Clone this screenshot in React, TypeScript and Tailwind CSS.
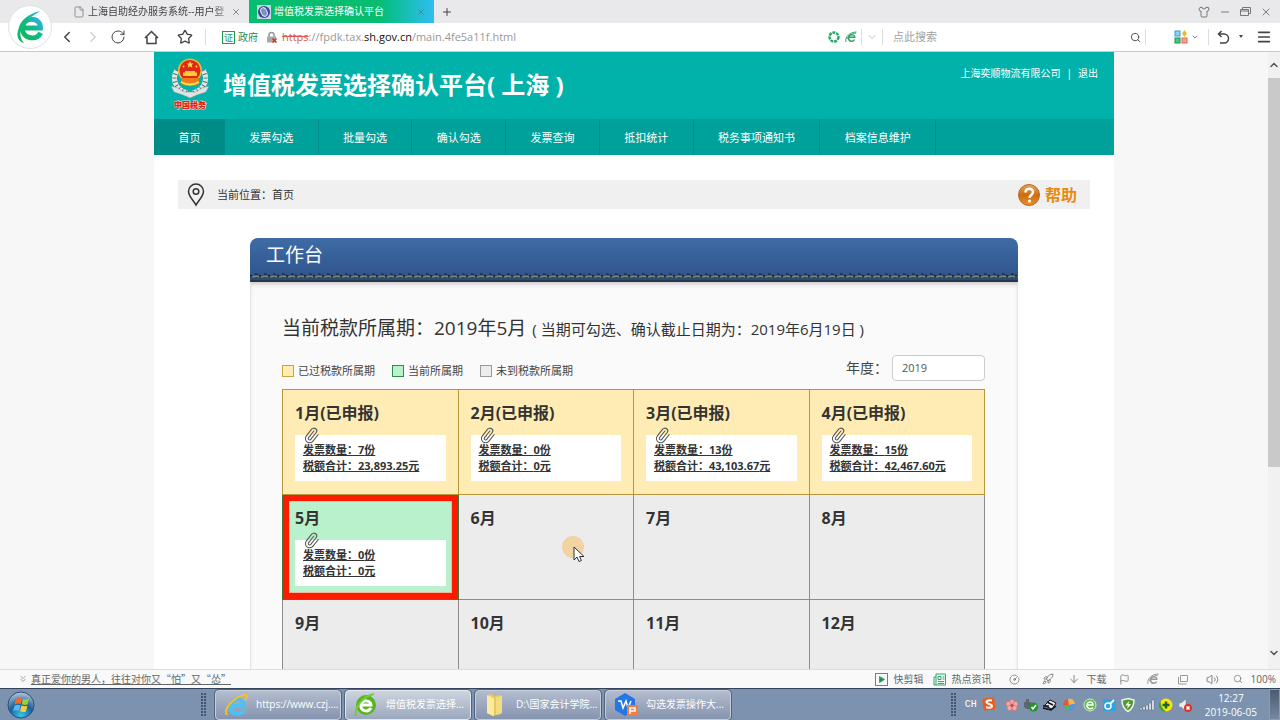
import React, { useState } from 'react';
import {
    ArrowDown,
    ChevronDown,
    ChevronLeft,
    ChevronRight,
    ChevronsDown,
    ChevronUp,
    CircleGauge,
    Copy,
    File,
    Flag,
    Menu,
    Minus,
    Paperclip,
    Plus,
    Rocket,
    RotateCw,
    Search,
    Shirt,
    Star,
    Volume2,
    X,
} from 'lucide-react';

type MonthStatus = 'past' | 'current' | 'future';

interface MonthInfo {
    title: string;
    status: MonthStatus;
    count?: string;
    tax?: string;
}

const navItems = ['发票勾选', '批量勾选', '确认勾选', '发票查询', '抵扣统计', '税务事项通知书', '档案信息维护'];

const rows: MonthInfo[][] = [
    [
        { title: '1月(已申报)', status: 'past', count: '7', tax: '23,893.25' },
        { title: '2月(已申报)', status: 'past', count: '0', tax: '0' },
        { title: '3月(已申报)', status: 'past', count: '13', tax: '43,103.67' },
        { title: '4月(已申报)', status: 'past', count: '15', tax: '42,467.60' },
    ],
    [
        { title: '5月', status: 'current', count: '0', tax: '0' },
        { title: '6月', status: 'future' },
        { title: '7月', status: 'future' },
        { title: '8月', status: 'future' },
    ],
    [
        { title: '9月', status: 'future' },
        { title: '10月', status: 'future' },
        { title: '11月', status: 'future' },
        { title: '12月', status: 'future' },
    ],
];

const cellStyles: Record<MonthStatus, string> = {
    past: 'bg-[#ffecb5] border-[#b8963a]',
    current: 'bg-[#baf1cd] border-[#3f7a3c] shadow-[inset_0_0_0_6px_#fb1c00,inset_0_0_0_7px_#f5b59b]',
    future: 'bg-[#ececec] border-[#8c8c8c]',
};

const BrowserLogo: React.FC<{ className?: string }> = ({ className }) => (
    <svg viewBox="0 0 28 36" className={className} fill="none">
        <defs>
            <linearGradient id="logoFill" x1="0" y1="1" x2="1" y2="0">
                <stop offset="0" stopColor="#0cb85a" />
                <stop offset="0.6" stopColor="#12b98c" />
                <stop offset="1" stopColor="#2fb4f0" />
            </linearGradient>
        </defs>
        <path d="M25 23.500C23 27.500 19 29 15 28.500C9.500 28 6 24 6.300 18.500C6.800 12.500 11 9.500 15.500 9.500C21.500 9.500 25 13.500 24.800 18.500H8" stroke="url(#logoFill)" strokeWidth="5" />
        <path d="M2 20C4 11 12 4 24 1C20 5 11 8 7 15C3 22 3 29 8 34C1 32 0 26 2 20Z" fill="url(#logoFill)" />
    </svg>
);

const SmallBrowserLogo: React.FC<{ className?: string; color: string }> = ({ className, color }) => (
    <svg viewBox="0 0 12 12" className={className} fill="none" stroke={color}>
        <path d="M9.500 8.500C8 11.500 3.500 10.500 3.500 7 3.500 3 9.800 2.500 9.800 6.300H4" strokeWidth="1.500" />
        <path d="M1 11C-.5 6 5 1 11.500 1M2 8C4 4 8 2.500 11 2" />
    </svg>
);

const Emblem = () => (
    <svg viewBox="0 0 40 54" className="h-[54px] w-10 shrink-0" fill="none">
        <path d="M7 12C2 20 4 31 17 35M33 12C38 20 36 31 23 35" stroke="#e5e7e6" strokeWidth="5" />
        <path d="M7 12C2 20 4 31 17 35M33 12C38 20 36 31 23 35" stroke="#4e6b68" strokeWidth="4" strokeDasharray="1 3" />
        <path d="M1 28L8 30L14 34H26L32 30L39 28L36 34L27 37L20 40L13 37L4 34Z" fill="#dfe3e3" stroke="#7d9594" strokeWidth="0.5" />
        <circle cx="20" cy="12.500" r="12" fill="#f4b631" />
        <circle cx="20" cy="12.500" r="10.500" fill="#e02817" />
        <path d="M20 3l1 2.500h2.600l-2 1.600.7 2.600-2.300-1.500-2.300 1.500.7-2.600-2-1.600H19z" fill="#ffd84a" />
        <circle cx="13.500" cy="8.500" r="1" fill="#ffd84a" />
        <circle cx="26.500" cy="8.500" r="1" fill="#ffd84a" />
        <path d="M15 13h10v1.500h2V18H13v-3.500h2z" fill="#ffca38" />
        <path d="M11 20h18v6c-5 3-13 3-18 0z" fill="#ee7b1c" />
        <path d="M11 24q9 5 18 0" stroke="#ffe14f" strokeWidth="2" />
        <text x="20" y="50" textAnchor="middle" fontSize="8" fontWeight="900" fill="#e3210f" stroke="#f6d5cf" strokeWidth="1" paintOrder="stroke" fontFamily="Noto Sans CJK SC, sans-serif">中国税务</text>
    </svg>
);

const Stitches = () => (
    <svg className="h-2 w-full" aria-hidden="true">
        <defs>
            <pattern id="stitch" width="9" height="8" patternUnits="userSpaceOnUse">
                <rect y="4" width="9" height="4" fill="#2b4a72" />
                <path d="M0 3L3 5M5 2L8 3" stroke="#1d2f4b" strokeWidth="2" fill="none" />
                <path d="M2 5L7 4L9 5" stroke="#7d8278" strokeWidth="1.500" fill="none" />
            </pattern>
        </defs>
        <rect width="100%" height="8" fill="url(#stitch)" />
    </svg>
);

const WindowTabs = () => (
    <div className="flex h-[23px] shrink-0 items-center bg-[#e9e9eb] pl-[73px] pr-2 text-[10px]">
        <div className="flex h-full w-44 items-center pr-2">
            <File className="h-3 w-3 shrink-0 text-[#777]" strokeWidth={1.500} />
            <span className="ml-[3px] flex-1 whitespace-nowrap text-[#444] [mask-image:linear-gradient(to_right,#000_88%,transparent)]">
                上海自助经办服务系统--用户登
            </span>
            <button aria-label="关闭标签" className="text-[#777]">
                <X size={10} />
            </button>
        </div>
        <div className="flex h-full w-[185px] items-center bg-linear-to-r from-[#06bd70] from-70% to-[#30bdf2] px-2 text-white">
            <svg viewBox="0 0 14 14" className="h-[14px] w-[14px] shrink-0">
                <rect width="14" height="14" fill="#c9d2e4" />
                <circle cx="7" cy="7" r="6" fill="#35478f" />
                <ellipse cx="7" cy="7" rx="3" ry="4.500" fill="#7f8fc4" stroke="#dbe3f5" transform="rotate(-25 7 7)" />
            </svg>
            <span className="ml-[3px] flex-1 whitespace-nowrap">增值税发票选择确认平台</span>
            <button aria-label="关闭标签" className="text-[#4a7f93]">
                <X size={10} />
            </button>
        </div>
        <button aria-label="新标签" className="ml-[7px] text-[#444]">
            <Plus size={12} />
        </button>
        <div className="ml-auto flex items-center gap-[9px] text-[#555]">
            <button aria-label="皮肤"><Shirt size={12} strokeWidth={1.500} /></button>
            <button aria-label="最小化"><Minus size={12} strokeWidth={1.500} /></button>
            <button aria-label="还原">
                <svg viewBox="0 0 11 10" className="h-[10px] w-[11px]" fill="none" stroke="#777">
                    <path d="M.5 2.500h8v6h-8zM.5 4h8M2.500 2.500v-2h8v6h-2" />
                </svg>
            </button>
            <button aria-label="关闭"><X size={12} strokeWidth={1.500} /></button>
        </div>
    </div>
);

const Divider = () => <span className="block h-4 w-px shrink-0 bg-[#ddd]" />;

const Toolbar = () => (
    <div className="flex h-[29px] shrink-0 items-center border-b border-[#c9c9c9] bg-white pl-[58px] pr-2 text-[#444]">
        <button aria-label="后退"><ChevronLeft size={18} strokeWidth={2} /></button>
        <button aria-label="前进" className="ml-2 text-[#ccc]"><ChevronRight size={18} strokeWidth={1.500} /></button>
        <button aria-label="刷新" className="ml-2"><RotateCw size={16} strokeWidth={1.500} /></button>
        <button aria-label="主页" className="ml-[18px]">
            <svg viewBox="0 0 15 15" className="h-[15px] w-[15px]" fill="none" stroke="#444" strokeWidth="1.500">
                <path d="M1 8L7.500 1.500L14 8M3 7v6.500h9V7" />
            </svg>
        </button>
        <button aria-label="收藏" className="ml-[18px]"><Star size={16} strokeWidth={2} /></button>
        <span className="ml-3 mr-4"><Divider /></span>
        <span className="flex h-[13px] w-[13px] items-center justify-center border border-[#1e9a55] text-[9px] leading-none text-[#1e9a55]">证</span>
        <span className="ml-[3px] text-[10px] text-[#2a8a55]">政府</span>
        <svg viewBox="0 0 12 13" className="ml-2 h-[13px] w-3">
            <path d="M3 6V4a2.500 2.500 0 0 1 5 0v2" fill="none" stroke="#999" strokeWidth="1.500" />
            <rect x="1" y="5.500" width="9" height="6" fill="#a9a9a9" />
            <path d="M6.500 7.500l4 4m0-4l-4 4" stroke="#dd2f22" strokeWidth="1.500" />
        </svg>
        <span className="ml-1 text-[11px] text-[#999]">
            <span className="text-[#dc5a50] line-through">https</span>://fpdk.tax.<span className="text-[#111]">sh.gov.cn</span>/main.4fe5a11f.html
        </span>
        <div className="ml-auto flex items-center">
            <svg viewBox="0 0 12 12" className="h-3 w-3">
                <circle cx="6" cy="6" r="4.500" fill="none" stroke="#2ba765" strokeWidth="2.500" strokeDasharray="3 .8" />
            </svg>
            <SmallBrowserLogo className="ml-[5px] h-3 w-3" color="#2ba765" />
            <span className="ml-1"><Divider /></span>
            <button aria-label="地址列表" className="mx-1 text-[#aaa]"><ChevronDown size={12} strokeWidth={1.500} /></button>
            <Divider />
            <input
                type="text"
                aria-label="搜索"
                placeholder="点此搜索"
                className="ml-[10px] w-[229px] text-[11px] outline-none placeholder:text-[#a2a2a2]"
            />
            <button aria-label="搜索" className="ml-2"><Search size={11} strokeWidth={2} /></button>
            <span className="ml-1 mr-7"><Divider /></span>
            <button aria-label="扩展">
                <svg viewBox="0 0 14 14" className="h-[14px] w-[14px]">
                    <rect x="1" y="1" width="5" height="5" fill="#8bd3f0" stroke="#3b9fc9" />
                    <path d="M10.500 0l2.500 3.500L10.500 7 8 3.500z" fill="#f5b81d" />
                    <rect x="1" y="8" width="5" height="5" fill="#45ca84" stroke="#16934f" />
                    <rect x="8" y="8" width="5" height="5" fill="#f9a08e" stroke="#de6a56" />
                </svg>
            </button>
            <ChevronDown size={8} className="ml-[3px] mr-[9px]" />
            <Divider />
            <button aria-label="撤销" className="ml-2">
                <svg viewBox="0 0 13 14" className="h-[14px] w-[13px]" fill="none" stroke="#444" strokeWidth="1.500">
                    <path d="M2 4h5a4.500 4.500 0 0 1 0 9H3M4.500 1L1.500 4l3 3" />
                </svg>
            </button>
            <svg viewBox="0 0 6 4" className="ml-2 mr-3 h-1 w-[6px]"><path d="M1 0h4L3 3z" fill="#444" /></svg>
            <button aria-label="菜单"><Menu size={16} strokeWidth={2.500} /></button>
        </div>
    </div>
);

const MonthCell: React.FC<{ month: MonthInfo; children?: React.ReactNode }> = ({ month, children }) => (
    <td className={`h-[105px] border px-3 pt-[11px] align-top ${cellStyles[month.status]}`}>
        <div className="relative">
            <h3 className="text-base leading-6 font-bold text-[#333]">{month.title}</h3>
            {month.count && (
                <div className="relative mt-[10px] h-[46px] bg-white px-2 pt-[7px] text-[11px] leading-4 font-bold text-[#333]">
                    <Paperclip className="absolute -top-2 left-2 h-[17px] w-[17px] -rotate-6 text-[#555]" strokeWidth={1.500} />
                    <a href="#count" className="block underline">发票数量：{month.count}份</a>
                    <a href="#tax" className="block underline">税额合计：{month.tax}元</a>
                </div>
            )}
            {children}
        </div>
    </td>
);

const Pointer = () => (
    <svg viewBox="0 0 24 28" className="absolute top-7 left-[91px] h-7 w-6">
        <circle cx="11" cy="13" r="11" fill="#f1d3a4" />
        <path d="M12 13v13l3-3 2 4.500 2.500-1-2-4H22z" fill="#fff" stroke="#333" strokeWidth="1" />
    </svg>
);

const Workbench = () => {
    const [year, setYear] = useState('2019');

    return (
        <section className="mx-auto mt-[29px] w-4/5 max-w-[768px]">
            <div className="flex h-11 flex-col justify-between overflow-hidden rounded-t-lg border-b-2 border-[#26364d] bg-linear-to-b from-[#3f6ca5] via-[#365f99] to-[#2f5388]">
                <h2 className="pl-4 text-[19px] leading-[34px] text-white">工作台</h2>
                <Stitches />
            </div>
            <div className="border-x border-[#e6e6e6] bg-[#fafafa] pt-8 pr-8 pb-8 pl-[31px] shadow-[inset_0_4px_4px_-2px_#c9c4c4]">
                <p className="text-[19px] leading-7 text-[#333]">
                    当前税款所属期：2019年5月
                    <span className="ml-[6px] text-[15px]">( 当期可勾选、确认截止日期为：2019年6月19日 )</span>
                </p>
                <div className="mt-3 flex h-[30px] items-start justify-between">
                    <ul className="flex gap-[17px] pt-2 text-[11px] leading-4 text-[#444]">
                        <li className="flex items-center gap-1">
                            <span className="h-3 w-3 border border-[#c9a43c] bg-[#ffecb5]" />已过税款所属期
                        </li>
                        <li className="flex items-center gap-1">
                            <span className="h-3 w-3 border border-[#2f8a4c] bg-[#baf1cd]" />当前所属期
                        </li>
                        <li className="flex items-center gap-1">
                            <span className="h-3 w-3 border border-[#999] bg-[#ececec]" />未到税款所属期
                        </li>
                    </ul>
                    <div className="flex items-center">
                        <label htmlFor="year" className="text-sm text-[#444]">年度：</label>
                        <select
                            id="year"
                            value={year}
                            onChange={(e) => setYear(e.target.value)}
                            className="ml-1 h-[26px] w-[93px] appearance-none rounded border border-[#ccc] bg-white px-[9px] text-[11px] text-[#555]"
                        >
                            <option>2019</option>
                            <option>2018</option>
                        </select>
                    </div>
                </div>
                <table className="mt-1 w-full table-fixed border-collapse">
                    <tbody>
                        {rows.map((row, i) => (
                            <tr key={i}>
                                {row.map((month) => (
                                    <MonthCell key={month.title} month={month}>
                                        {month.title === '6月' && <Pointer />}
                                    </MonthCell>
                                ))}
                            </tr>
                        ))}
                    </tbody>
                </table>
            </div>
        </section>
    );
};

const TaxPage = () => (
    <main className="mx-auto w-full max-w-[960px] bg-white">
        <header className="flex h-[67px] items-center justify-between bg-[#00b2aa] px-4 pb-[2px] text-white">
            <div className="flex items-center">
                <Emblem />
                <h1 className="ml-[13px] text-2xl font-bold">增值税发票选择确认平台( 上海 )</h1>
            </div>
            <div className="flex gap-[6px] self-start pt-[13px] text-[10px] leading-4">
                <span>上海奕顺物流有限公司</span>
                <span>|</span>
                <a href="#logout">退出</a>
            </div>
        </header>
        <nav className="flex h-9 bg-[#00a19b] text-[11px] leading-4 text-white">
            <a href="#home" className="flex w-[71px] items-center justify-center bg-[#008c86] pt-[2px]">首页</a>
            <div className="flex w-[711px]">
                {navItems.map((item) => (
                    <a key={item} href="#nav" className="flex flex-auto items-center justify-center border-r border-[#008f89] px-[23px] pt-[2px] whitespace-nowrap">
                        {item}
                    </a>
                ))}
            </div>
        </nav>
        <div className="mx-6 mt-[25px] flex h-[29px] items-center bg-[#f0f0f0] px-2">
            <svg viewBox="0 0 20 24" className="h-6 w-5" fill="none" stroke="#333" strokeWidth="1.500">
                <path d="M10 22C7 17 2.500 13 2.500 8.500a7.500 7.500 0 0 1 15 0C17.500 13 13 17 10 22z" />
                <circle cx="10" cy="8.500" r="2.800" />
            </svg>
            <span className="ml-[11px] pt-[2px] text-[11px] text-[#333]">当前位置：首页</span>
            <a href="#help" className="ml-auto mr-[5px] flex items-center gap-[5px] text-base font-bold text-[#e88a10]">
                <svg viewBox="0 0 22 22" className="h-[22px] w-[22px]">
                    <defs>
                        <linearGradient id="helpFill" x1="0" y1="0" x2="0" y2="1">
                            <stop offset="0" stopColor="#e9a75c" />
                            <stop offset="0.500" stopColor="#cc6d11" />
                            <stop offset="1" stopColor="#e9912b" />
                        </linearGradient>
                    </defs>
                    <circle cx="11" cy="11" r="10.500" fill="url(#helpFill)" stroke="#b5691d" />
                    <path d="M7.500 8.500C7.500 3.500 15 3.500 15 8c0 3-3.500 3-3.500 6" fill="none" stroke="#fff" strokeWidth="2.500" />
                    <circle cx="11.500" cy="17" r="1.600" fill="#fff" />
                </svg>
                帮助
            </a>
        </div>
        <Workbench />
    </main>
);

const ScrollTrack = () => (
    <div className="flex w-3 shrink-0 flex-col items-center bg-[#f1f1f1] text-[#555]">
        <ChevronUp size={12} strokeWidth={3} className="my-[7px] shrink-0" />
        <div className="w-full flex-[389] bg-[#c9c9c9]" />
        <div className="flex-[170]" />
        <ChevronDown size={12} strokeWidth={3} className="my-[10px] shrink-0" />
    </div>
);

const StatusBar = () => (
    <footer className="flex h-[19px] shrink-0 items-center border-t border-[#ddd] bg-[#f9f9f9] pr-1 pl-[18px] text-[10px] whitespace-nowrap text-[#666]">
        <ChevronsDown size={10} strokeWidth={1.500} />
        <a href="#news" className="ml-[3px] font-['Noto_Sans_CJK_SC',sans-serif] leading-4 underline">真正爱你的男人，往往对你又“怕”又“怂”</a>
        <div className="ml-auto flex items-center">
            <svg viewBox="0 0 13 13" className="mr-[6px] h-[13px] w-[13px]" fill="none" stroke="#2ea66c">
                <rect x=".5" y=".5" width="12" height="12" />
                <path d="M4.500 3.500l5 3-5 3z" fill="#1a8f56" />
            </svg>
            快剪辑
            <svg viewBox="0 0 13 13" className="mr-[6px] ml-[9px] h-[13px] w-[13px]" fill="none" stroke="#2ea66c">
                <path d="M3 1h9.500v11H1V4h2zM3 4v8M5 3.500h3v3H5zM9.500 4h2M9.500 6h2M5 8.500h6M5 10.500h6" />
            </svg>
            热点资讯
            <CircleGauge size={11} strokeWidth={1.500} className="ml-[17px]" />
            <Rocket size={12} strokeWidth={1.500} className="ml-[22px]" />
            <ArrowDown size={12} strokeWidth={1.500} className="ml-[14px] mr-[7px]" />
            下载
            <Flag size={11} strokeWidth={1.500} className="ml-3" />
            <SmallBrowserLogo className="ml-[17px] h-3 w-3" color="#999" />
            <svg viewBox="0 0 11 11" className="ml-[19px] h-[11px] w-[11px]" fill="none" stroke="#999">
                <path d="M2.500 1.500h7v6h-7zM.5 3v7h8" />
            </svg>
            <Volume2 size={13} strokeWidth={1.500} className="ml-[17px]" />
            <Search size={10} strokeWidth={1.500} className="ml-[14px] mr-2" />
            <span>100%</span>
        </div>
    </footer>
);

const taskButton =
    'flex h-[30px] w-[126px] items-center gap-2 rounded-sm border border-[#c3ccd8] bg-linear-to-b from-[#b4bcce] to-[#8594af] px-2 text-[10px] whitespace-nowrap text-white shadow-[0_0_0_1px_#52637c]';

const activeTaskButton =
    'flex h-[30px] w-[126px] items-center gap-2 rounded-sm border border-[#e3e8ee] bg-linear-to-b from-[#cdd4df] to-[#9ba8bd] px-2 text-[10px] whitespace-nowrap text-white shadow-[0_0_0_1px_#52637c]';

const Grip = () => (
    <svg className="h-6 w-[6px] shrink-0">
        <defs>
            <pattern id="grip" width="3" height="3" patternUnits="userSpaceOnUse">
                <rect width="2" height="2" fill="#44566f" />
            </pattern>
        </defs>
        <rect width="6" height="24" fill="url(#grip)" />
    </svg>
);

const TrayIcons = () => (
    <div className="flex items-center gap-[3px]">
        <svg viewBox="0 0 16 16" className="h-4 w-4">
            <rect x="2" y="1" width="12" height="12" rx="2" fill="#f25a1d" transform="rotate(-8 8 8)" />
            <path d="M11 3.500C7 3 5 4 5.500 5.500S11 7 11 9s-3.500 2-6 1.300" fill="none" stroke="#fff" strokeWidth="2" />
        </svg>
        <svg viewBox="0 0 16 16" className="ml-1 h-4 w-4">
            <g fill="#f2a8a5" stroke="#d96f70" strokeWidth=".7">
                <circle cx="8" cy="5" r="2.500" /><circle cx="4.500" cy="7" r="2.500" /><circle cx="11.500" cy="7" r="2.500" />
                <circle cx="5.500" cy="11" r="2.500" /><circle cx="10.500" cy="11" r="2.500" />
            </g>
            <circle cx="8" cy="8.500" r="1.500" fill="#c64a50" />
        </svg>
        <svg viewBox="0 0 16 16" className="h-4 w-4">
            <path d="M3 2v3H1v5l3 2h4V5H6V2" fill="#5c6670" />
            <circle cx="10.500" cy="10" r="4.500" fill="#25902d" />
            <path d="M8.500 10l1.500 2 3-4" fill="none" stroke="#fff" strokeWidth="1.500" />
        </svg>
        <svg viewBox="0 0 16 16" className="h-4 w-4" stroke="#111">
            <path d="M3 8l5-5 6 3-4 6-7-3z" fill="#eee" />
            <path d="M1 9h6M1 11l8 2 5-4M5 5l6 3" fill="none" strokeWidth="1.500" />
        </svg>
        <svg viewBox="0 0 16 16" className="h-4 w-4">
            <path d="M8 8L7 2Q2 3 2 9z" fill="#e9543b" />
            <path d="M8 8L7 2q6-1 7 5z" fill="#f5b83a" />
            <path d="M8 8l6-1q0 5-5 7z" fill="#4f94ef" />
            <path d="M8 8L2 9q2 4 7 5z" fill="#58b364" />
        </svg>
        <svg viewBox="0 0 16 16" className="ml-[2px] h-4 w-4">
            <circle cx="8" cy="8" r="6" fill="#5cb94a" stroke="#cfeec8" />
            <path d="M11 10.500c-2 2.500-6.500 1-6-2.500.5-4 6-4 6 0H5" fill="none" stroke="#fff" strokeWidth="1.500" />
        </svg>
        <svg viewBox="0 0 16 16" className="h-4 w-4">
            <rect x="2" y="2" width="13" height="12" fill="#29a5e4" />
            <circle cx="7" cy="9" r="3" fill="none" stroke="#fff" strokeWidth="1.500" />
            <path d="M9 7l4-4" stroke="#fff" strokeWidth="2" />
        </svg>
        <svg viewBox="0 0 16 16" className="h-4 w-4">
            <path d="M8 1.500l6 1.500q0 8-6 11.500Q2 11 2 3z" fill="#519e30" stroke="#eef3ea" strokeWidth="1.500" />
            <path d="M9 4L5.500 8.500H8L7 12l4-5H8.500z" fill="#fff" />
        </svg>
        <svg viewBox="0 0 16 16" className="h-4 w-4" fill="#fff" stroke="#4d5d74" strokeWidth=".5">
            <path d="M1 11h2v2H1zM4 9.500h2V13H4zM7 8h2v5H7zM10 6h2v7h-2zM13 3h2v10h-2z" />
        </svg>
        <svg viewBox="0 0 16 16" className="h-4 w-4">
            <circle cx="8" cy="8" r="6.500" fill="#ffe500" />
            <path d="M3 13A6.500 6.500 0 0 1 3 3.500Q1.500 10 8 14.500 5 14.500 3 13z" fill="#3fa336" />
            <path d="M8 4.500v7M4.500 8h7" stroke="#126b2e" strokeWidth="2.500" />
        </svg>
        <svg viewBox="0 0 16 16" className="h-4 w-4">
            <path d="M2 6h2l5-4v12l-5-4H2z" fill="#e9edf1" stroke="#718096" strokeWidth=".5" />
            <circle cx="11" cy="11" r="4" fill="#dc3428" />
            <path d="M9.500 9.500l3 3m0-3l-3 3" stroke="#fff" strokeWidth="1.500" />
        </svg>
    </div>
);

const Taskbar = () => (
    <div className="flex h-8 shrink-0 items-center border-t border-[#34435a] bg-[#7c92ae] pl-[7px] text-white">
        <button aria-label="开始" className="shrink-0">
            <svg viewBox="0 0 28 28" className="h-7 w-7">
                <defs>
                    <radialGradient id="orb" cx=".5" cy=".9" r=".9">
                        <stop offset="0" stopColor="#35c5ed" />
                        <stop offset=".5" stopColor="#1b619a" />
                        <stop offset="1" stopColor="#b7cbdc" />
                    </radialGradient>
                </defs>
                <circle cx="14" cy="14" r="13" fill="url(#orb)" stroke="#2b4e74" />
                <path d="M9 8q3-2 6-.5l-1.300 5.500q-3-1-6 .5z" fill="#f1692d" />
                <path d="M16 8q3 1 6-.5l-1.500 6q-3 1-5.800-.2z" fill="#9dce37" />
                <path d="M7.500 14.500q3-1.500 6-.3L12 20q-3-1.500-6 .2z" fill="#58b7ec" />
                <path d="M14.500 14.500q3 1.200 5.800.3L19 20.500q-3 1.200-5.900-.3z" fill="#fccb3c" />
            </svg>
        </button>
        <div className="ml-[166px]"><Grip /></div>
        <div className="ml-2 flex gap-1">
            <button className={taskButton}>
                <svg viewBox="0 0 24 24" className="h-6 w-6 shrink-0" fill="none">
                    <path d="M20 17c-3 6-14 5-13.500-4C7 4 20 4 20 13H8" stroke="#4cc2f4" strokeWidth="4" />
                    <path d="M3 22C-1 16 10 3 22 2c2 1 0 4-1 5" stroke="#f3c02f" strokeWidth="2" />
                </svg>
                https://www.czj....
            </button>
            <button className={activeTaskButton}>
                <svg viewBox="0 0 24 24" className="h-6 w-6 shrink-0" fill="none">
                    <circle cx="12" cy="12" r="10" fill="#58b51f" />
                    <path d="M17 15c-3 5-11 3-10-3 1-6 10-5 10 0H7" stroke="#fff" strokeWidth="3" />
                    <path d="M2 23C0 15 9 3 20 1" stroke="#75c93d" strokeWidth="2" />
                </svg>
                增值税发票选择...
            </button>
            <button className={taskButton}>
                <svg viewBox="0 0 24 24" className="h-6 w-6 shrink-0">
                    <path d="M3 2l5-1 2 2 7-1v19l-9 2-5-3z" fill="#e8c95c" />
                    <path d="M8 4l2 2v17l-7-3V2z" fill="#fbeaa0" />
                    <path d="M12 4l6-1v17l-6 2z" fill="#f3dc7f" />
                </svg>
                D:\国家会计学院...
            </button>
            <button className={taskButton}>
                <svg viewBox="0 0 24 24" className="h-6 w-6 shrink-0">
                    <path d="M11 0l10 6v11l-10 6-10-6V6z" fill="#2376e8" />
                    <path d="M4 8h3l2 7 3-7 2 7 3-7" fill="none" stroke="#fff" strokeWidth="1.500" />
                    <rect x="13" y="12" width="11" height="11" fill="#f47d3c" />
                    <path d="M16 21v-6h5v3h-5" fill="none" stroke="#fff" strokeWidth="1.500" />
                </svg>
                勾选发票操作大...
            </button>
        </div>
        <div className="ml-auto flex items-center">
            <Grip />
            <span className="mr-1 ml-2 font-['Liberation_Mono',monospace] text-[10px]">CH</span>
            <TrayIcons />
            <div className="mx-3 text-center text-[10px] leading-[14px]">
                <div>12:27</div>
                <div>2019-06-05</div>
            </div>
            <button aria-label="显示桌面" className="h-[31px] w-[11px] border border-[#8a9cb3] bg-linear-to-b from-[#4b5c72] to-[#76889f]" />
        </div>
    </div>
);

export default function App() {
    return (
        <div className="relative flex h-screen flex-col overflow-hidden bg-[#f7f7f7] font-['Open_Sans','Noto_Sans_CJK_SC',sans-serif]">
            <WindowTabs />
            <Toolbar />
            <div className="absolute top-[5px] left-2 flex h-11 w-11 items-center justify-center rounded-full border border-[#e2e2e2] bg-white">
                <BrowserLogo className="h-[35px] w-7" />
            </div>
            <div className="flex min-h-0 flex-1">
                <div className="min-w-0 flex-1 overflow-hidden">
                    <TaxPage />
                </div>
                <ScrollTrack />
            </div>
            <StatusBar />
            <Taskbar />
        </div>
    );
}
